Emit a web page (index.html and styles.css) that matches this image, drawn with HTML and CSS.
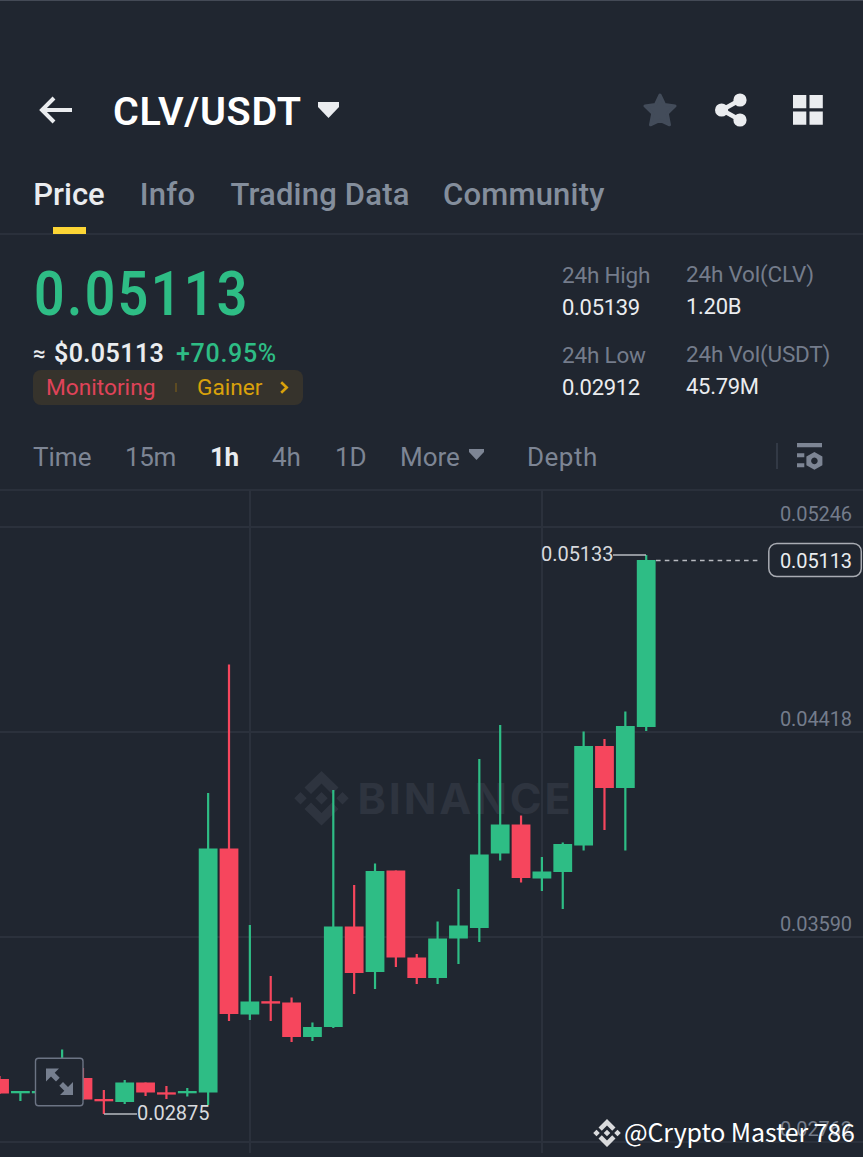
FILE: index.html
```html
<!DOCTYPE html>
<html lang="en">
  <head>
    <meta charset="utf-8">
    <meta name="viewport" content="width=device-width, initial-scale=1">
    <title>CLV/USDT</title>
    <link rel="stylesheet" href="styles.css">
  </head>
  <body>
    <header class="topbar">
      <svg class="back" width="34" height="28" viewBox="0 0 34 28" fill="none" stroke="#eaecef" stroke-width="4">
        <path d="M33 14H4M15 2L3 14l12 12"/>
      </svg>
      <h1 class="pair">CLV/USDT</h1>
      <svg class="pair-caret" width="21" height="16" viewBox="0 0 21 16" fill="#eaecef"><path d="M0 0h21v5L10.500 16 0 5z"/></svg>
      <div class="actions">
        <svg width="34" height="34" viewBox="0 0 34 34" fill="#434c5a" stroke="#434c5a" stroke-width="3" stroke-linejoin="round">
          <path d="M17 2l4.500 9.500 10.500 1.500-7.700 7.500 2.200 11.300L17 27.300l-9.500 4.500L9.700 20.500 2 13l10.500-1.500z"/>
        </svg>
        <svg width="32" height="34" viewBox="0 0 32 34" fill="#eaecef">
          <path d="M25 7L7 17l18 10" fill="none" stroke="#eaecef" stroke-width="4.500"/>
          <circle cx="25" cy="7" r="6.600"/><circle cx="6.600" cy="17" r="6.600"/><circle cx="25" cy="27" r="6.600"/>
        </svg>
        <svg width="30" height="30" viewBox="0 0 30 30" fill="#eaecef">
          <path d="M0 0h13.300v13.300H0zM16.500 0h13.300v13.300H16.500zM0 16.500h13.300v13.300H0zM16.500 16.500h13.300v13.300H16.500z"/>
        </svg>
      </div>
    </header>

    <nav class="tabs">
      <a class="tab tab-price active">Price</a>
      <a class="tab tab-info">Info</a>
      <a class="tab tab-trading">Trading Data</a>
      <a class="tab tab-community">Community</a>
    </nav>

    <section class="ticker">
      <div class="quote">
        <div class="last">0.05113</div>
        <div class="fiat"><span class="approx">≈</span><span class="usd">$0.05113</span><span class="change">+70.95%</span></div>
        <div class="tags">
          <span class="monitoring">Monitoring</span>
          <i class="tag-divider"></i>
          <span class="gainer">Gainer</span>
          <svg width="9" height="13" viewBox="0 0 9 13" fill="none" stroke="#d9a10b" stroke-width="2.600"><path d="M1.200 1.200l5.500 5.300-5.500 5.300"/></svg>
        </div>
      </div>
      <dl class="stats stats-range">
        <dt class="high">24h High</dt><dd>0.05139</dd>
        <dt class="low">24h Low</dt><dd>0.02912</dd>
      </dl>
      <dl class="stats stats-vol">
        <dt>24h Vol(CLV)</dt><dd>1.20B</dd>
        <dt>24h Vol(USDT)</dt><dd>45.79M</dd>
      </dl>
    </section>

    <nav class="intervals">
      <span class="iv iv-time">Time</span>
      <span class="iv iv-15m">15m</span>
      <span class="iv iv-1h active">1h</span>
      <span class="iv iv-4h">4h</span>
      <span class="iv iv-1d">1D</span>
      <span class="iv iv-more">More</span>
      <svg class="more-caret" width="15" height="11" viewBox="0 0 15 11" fill="#7d8594"><path d="M0 0h15v3L7.500 11 0 3z"/></svg>
      <span class="iv iv-depth">Depth</span>
      <span class="settings">
        <svg width="26" height="27" viewBox="0 0 26 27" fill="#7d8594">
          <path d="M0 0h25v4.300H0zM0 10.300h7.300v4H0zM0 20.300h7.300v4H0z"/>
          <path fill-rule="evenodd" d="M17.400 9l8 4.500v8.800l-8 4.500-8-4.500v-8.800zM17.400 14.600a3.300 3.300 0 1 0 .01 0z"/>
        </svg>
      </span>
    </nav>

    <main class="chart">
      <svg class="plot" width="863" height="667" viewBox="0 490 863 667">
        <g class="watermark">
          <path d="M321.500 771l17 16.500-6.500 6.500-10.500-10.500L311 794l-6.500-6.500zM321.500 825.500l17-16.500-6.500-6.500-10.500 10.500L311 802.500l-6.500 6.500zM321.500 792l6.200 6.200-6.200 6.200-6.200-6.200zM300.500 792l6.200 6.200-6.200 6.200-6.200-6.200zM342.500 792l6.200 6.200-6.200 6.200-6.200-6.200z"/>
          <text x="357.500" y="813.500" textLength="213">BINANCE</text>
        </g>
        <path class="grid" d="M0 527H863M0 732H863M0 937H863M0 1142H863M250 490V1153M542 490V1153"/>
        <g id="candles"></g>
        <path class="marker" d="M613 555H646M104 1114H137"/>
        <path class="last-line" d="M656 560.500H758"/>
        <g class="price-label">
          <text x="541" y="561" textLength="72.500">0.05133</text>
          <text x="137" y="1120" textLength="72.500">0.02875</text>
        </g>
        <g class="axis">
          <text x="780" y="521" textLength="72">0.05246</text>
          <text x="780" y="726" textLength="72">0.04418</text>
          <text x="780" y="931" textLength="72">0.03590</text>
          <text x="780" y="1136" textLength="72">0.02762</text>
        </g>
        <g class="current">
          <rect x="768.800" y="543.500" width="92.500" height="33" rx="8"/>
          <text x="780" y="568" textLength="72">0.05113</text>
        </g>
        <g class="expand">
          <rect x="35.500" y="1058.300" width="47.500" height="47.500" rx="3"/>
          <path d="M46 1068.500h13l-4.300 4.300 5 5-3.700 3.700-5-5-5 5zM73 1095h-13l4.300-4.300-5-5 3.700-3.700 5 5 5-5z"/>
        </g>
        <g class="author">
          <path d="M607 1119l8.500 8.500-3.300 3.300-5.200-5.300-5.200 5.300-3.300-3.300zM607 1147l8.500-8.500-3.300-3.300-5.200 5.300-5.200-5.300-3.300 3.300zM607 1129.700l3.300 3.300-3.300 3.300-3.300-3.300zM596.500 1129.700l3.300 3.300-3.300 3.300-3.300-3.300zM617.500 1129.700l3.300 3.300-3.300 3.300-3.300-3.300z"/>
          <text x="624" y="1142" textLength="231">@Crypto Master 786</text>
        </g>
      </svg>
    </main>
    <script src="chart.js"></script>
  </body>
</html>
```

FILE: styles.css
```css
body {
  margin: 0;
  height: 1157px;
  box-sizing: border-box;
  overflow: hidden;
  border-top: 1px solid #444a56;
  background: #202630;
  color: #eaecef;
  font-family: Roboto, "Noto Sans", sans-serif;
}
h1, dl, dd {
  margin: 0;
}
svg {
  display: block;
  flex: none;
}

.topbar {
  display: flex;
  align-items: center;
  height: 70px;
  padding: 74px 40px 0 39px;
}
.pair {
  width: 188px;
  margin-left: 40px;
  color: #fff;
  font-size: 39.5px;
  font-weight: 600;
  letter-spacing: 0.7px;
  line-height: 70px;
  white-space: nowrap;
  padding-top: 4px;
}
.pair-caret {
  margin-left: 17px;
}
.actions {
  display: flex;
  align-items: center;
  margin-left: auto;
}
.actions svg + svg {
  margin-left: 38px;
}
.actions svg:last-child {
  margin-left: 46px;
}

.tabs {
  display: flex;
  height: 88px;
  padding-left: 34px;
  border-bottom: 2px solid #2a303b;
  box-sizing: border-box;
  margin-top: 2px;
}
.tab {
  display: flex;
  flex-direction: column;
  align-items: center;
  height: 87px;
  color: #848e9c;
  font-size: 31px;
  font-weight: 500;
  letter-spacing: 0.2px;
  line-height: 96px;
  white-space: nowrap;
}
.tab.active {
  color: #eaecef;
  letter-spacing: 0;
}
.tab.active::after {
  content: "";
  width: 33px;
  height: 7px;
  margin-top: -16px;
  background: #fcd535;
}
.tab-price { width: 70px; margin-right: 35px; }
.tab-info { width: 57px; margin-right: 34px; }
.tab-trading { width: 180px; margin-right: 33px; }

.ticker {
  display: flex;
  height: 191px;
}
.quote {
  width: 529px;
  padding: 25px 0 0 33px;
}
.last {
  height: 70px;
  margin-left: 1px;
  color: #2ebd85;
  font-size: 61.5px;
  font-weight: 600;
  letter-spacing: 2.8px;
  line-height: 69px;
  transform: scaleX(0.87);
  transform-origin: left;
}
.fiat {
  display: flex;
  height: 40px;
  font-size: 25px;
  font-weight: 600;
  letter-spacing: 0.4px;
  line-height: 48px;
}
.approx { width: 21px; font-size: 22px; }
.usd { width: 122px; }
.change { color: #2ebd85; font-weight: 500; letter-spacing: 0.7px; }
.tags {
  display: flex;
  align-items: center;
  width: 270px;
  height: 35px;
  box-sizing: border-box;
  padding: 0 14px 0 13px;
  border-radius: 8px;
  background: #36332c;
  font-size: 22.7px;
}
.monitoring { width: 109px; color: #e04359; }
.tag-divider { width: 2px; height: 9px; margin: 0 20px; background: #5d4b22; }
.gainer { width: 66px; margin-right: 17px; color: #d9a10b; }

.stats {
  font-size: 22.5px;
  padding-top: 25px;
}
.stats-range { width: 124px; padding-top: 26px; }
.stats dt {
  height: 32px;
  color: #747c8b;
  line-height: 29px;
  letter-spacing: -0.2px;
  white-space: nowrap;
}
.stats dd {
  height: 48px;
  font-size: 22px;
  letter-spacing: -0.3px;
  line-height: 30px;
}

.intervals {
  display: flex;
  align-items: center;
  height: 65px;
  box-sizing: border-box;
  padding: 0 0 1px 33px;
  border-bottom: 2px solid #2a303b;
  color: #7d8594;
  font-size: 26px;
}
.iv.active {
  color: #eaecef;
  font-weight: 700;
}
.iv-time { width: 92px; }
.iv-15m { width: 85px; letter-spacing: -0.3px; }
.iv-1h { width: 62px; letter-spacing: -0.4px; }
.iv-4h { width: 63px; }
.iv-1d { width: 65px; }
.iv-more { width: 69px; }
.more-caret { margin-top: -5px; }
.iv-depth { margin-left: 43px; letter-spacing: 0.5px; }
.settings {
  height: 26px;
  margin-top: -3px;
  margin-left: auto;
  margin-right: 40px;
  padding-left: 19px;
  border-left: 2px solid #323945;
}

.chart {
  margin-top: -1px;
}
.grid {
  fill: none;
  stroke: #2b313c;
  stroke-width: 2;
}
.watermark {
  fill: #2e343f;
}
.watermark text {
  font: 700 43px Inter, sans-serif;
}
.up { fill: #2ebd85; }
.down { fill: #f6465d; }
.marker {
  stroke: #b7bac0;
  stroke-width: 1.6;
}
.last-line {
  stroke: #b7bac0;
  stroke-width: 1.6;
  stroke-dasharray: 4.6 4.2;
}
.price-label text,
.axis text,
.current text {
  font-size: 20px;
}
.price-label {
  fill: #d8dade;
}
.axis {
  fill: #747c8b;
}
.current rect {
  fill: #202630;
  stroke: #a9acb3;
  stroke-width: 1.5;
}
.current text {
  fill: #eaecef;
}
.expand rect {
  fill: #202630;
  stroke: #6c7484;
  stroke-width: 1.4;
}
.expand path {
  fill: #767f8f;
}
.author path {
  fill: #d9dadc;
}
.author text {
  fill: #fff;
  font: 400 25px "Noto Sans CJK SC", sans-serif;
}
```

FILE: chart.js
```js
// high, body top, body bottom, low (in plot pixels), newest candle first
const candles = [
  ['up', 555, 560, 727, 731],
  ['up', 711.5, 726, 788, 850.5],
  ['down', 739, 746, 788, 830],
  ['up', 731.5, 746, 845.5, 850.5],
  ['up', 842.5, 844, 872, 909],
  ['up', 857, 871.5, 878.5, 891],
  ['down', 815.5, 824.5, 878, 882.5],
  ['up', 725, 824.5, 853.5, 860.5],
  ['up', 759, 854.5, 928, 942],
  ['up', 889, 925.5, 938.5, 964],
  ['up', 921.5, 938.5, 978, 984],
  ['down', 954, 957.5, 978, 984],
  ['down', 870.5, 870.5, 957.5, 967],
  ['up', 863.5, 871, 972, 989],
  ['down', 885, 926.5, 973, 994],
  ['up', 790, 926.5, 1027, 1028],
  ['up', 1022.5, 1027, 1037, 1041],
  ['down', 997.5, 1002.5, 1037, 1042],
  ['down', 976, 1001.2, 1003.6, 1021],
  ['up', 925, 1001.5, 1014.5, 1020],
  ['down', 664.5, 848.5, 1014, 1021],
  ['up', 793, 848.5, 1092.5, 1105],
  ['up', 1088, 1091, 1093.3, 1096.5],
  ['down', 1086, 1092.3, 1094.6, 1099],
  ['down', 1082.5, 1082.5, 1092.5, 1096],
  ['up', 1080, 1082.5, 1102, 1104],
  ['down', 1090, 1099, 1101.3, 1114],
  ['down', 1068, 1078, 1099.5, 1100],
  ['up', 1049.5, 1080, 1092, 1093],
  ['up', 1090, 1091, 1093.3, 1094],
  ['up', 1091, 1091, 1093.3, 1101],
  ['down', 1076, 1079, 1093.5, 1094],
];

const group = document.getElementById('candles');

function addRect(cls, x, y, width, height) {
  const rect = document.createElementNS('http://www.w3.org/2000/svg', 'rect');
  rect.setAttribute('class', cls);
  rect.setAttribute('x', x);
  rect.setAttribute('y', y);
  rect.setAttribute('width', width);
  rect.setAttribute('height', height);
  group.appendChild(rect);
}

candles.forEach(([cls, high, top, bottom, low], i) => {
  const x = 646.2 - i * 20.86;
  addRect(cls, x - 1.1, high, 2.2, low - high);
  addRect(cls, x - 9.4, top, 18.8, bottom - top);
});
```
